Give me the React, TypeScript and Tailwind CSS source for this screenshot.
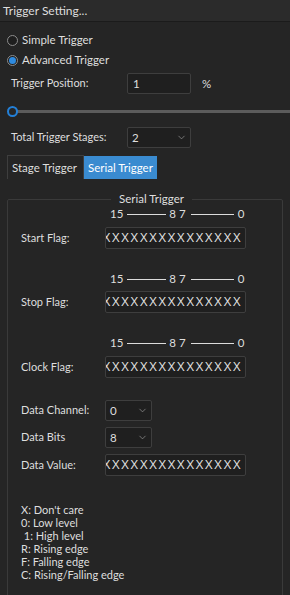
import { ChevronDown } from 'lucide-react';

const FONT = 'font-["Lato","Liberation_Sans",sans-serif]';

function Radio({ label, checked }: { label: string; checked?: boolean }) {
  return (
    <div className="flex h-[20px] items-center pl-[7px]">
      <span className="flex h-[11px] w-[11px] items-center justify-center rounded-full border border-[#8c8c8c] bg-[#1e1e1e]">
        {checked && <span className="h-[7px] w-[7px] rounded-full bg-[#2f8be0]" />}
      </span>
      <span className="ml-[4px] text-[11.5px]">{label}</span>
    </div>
  );
}

function Select({ value, width }: { value: string; width: string }) {
  return (
    <div className={`flex h-[21px] items-center justify-between rounded-[2px] border border-[#3e3e3e] bg-[#1f1f1f] pl-[4px] pr-[3px] ${width}`}>
      <span className="text-[11.5px]">{value}</span>
      <ChevronDown size={11} strokeWidth={1.5} className="text-[#9a9a9a]" />
    </div>
  );
}

function FlagInput() {
  return (
    <div className="flex h-[22px] w-[141px] items-center justify-end overflow-hidden whitespace-nowrap rounded-[2px] border border-[#3e3e3e] bg-[#1f1f1f] pr-[3px]">
      <span className='font-["Liberation_Sans",sans-serif] text-[12px] tracking-[1.3px]'>XXXXXXXXXXXXXXXX</span>
    </div>
  );
}

function Bits({ className = '' }: { className?: string }) {
  return (
    <div className={`flex h-[14px] items-center pl-[89px] text-[11.5px] leading-[14px] ${className}`}>
      <span>15</span>
      <span className="ml-[4px] mr-[3px] h-px w-[39px] bg-[#dcdcdc]" />
      <span>8 7</span>
      <span className="ml-[5px] mr-[4px] h-px w-[43px] bg-[#dcdcdc]" />
      <span>0</span>
    </div>
  );
}

function Row({ label, children, className = '' }: { label: string; children: React.ReactNode; className?: string }) {
  return (
    <div className={`flex items-center ${className}`}>
      <span className="w-[84px] text-[11px]">{label}</span>
      {children}
    </div>
  );
}

export default function App() {
  return (
    <div className={`h-[595px] w-[290px] overflow-hidden bg-[#252525] text-[#dedede] ${FONT}`}>
      <div className="h-[22px] border-b border-[#1b1b1b] bg-[#2b2b2b] pl-[3px] text-[12px] leading-[21px]">
        Trigger Setting...
      </div>

      <div className="mt-[8px]">
        <Radio label="Simple Trigger" />
        <Radio label="Advanced Trigger" checked />
      </div>

      <div className="mt-[3px] flex h-[21px] items-center pl-[11px]">
        <span className="w-[116px] text-[11px]">Trigger Position:</span>
        <div className="flex h-[21px] w-[64px] items-center rounded-[2px] border border-[#3e3e3e] bg-[#1f1f1f] pl-[5px] text-[11.5px]">
          1
        </div>
        <span className="ml-[11px] text-[11.5px]">%</span>
      </div>

      <div className="relative mt-[10px] flex h-[14px] items-center pl-[8px]">
        <div className="h-[3px] flex-1 bg-[#5c5c5c]" />
        <span className="absolute left-[7px] top-[2px] h-[11px] w-[11px] rounded-full border-2 border-[#2380d8] bg-[#262626]" />
      </div>

      <div className="mt-[9px] flex h-[21px] items-center pl-[11px]">
        <span className="w-[116px] text-[11px]">Total Trigger Stages:</span>
        <Select value="2" width="w-[64px]" />
      </div>

      <div className="mt-[7px] flex h-[24px] items-end pl-[7px]">
        <div className="flex h-[24px] w-[77px] items-center border border-b-0 border-[#3e3e3e] pl-[4px] text-[11.5px]">
          Stage Trigger
        </div>
        <div className="flex h-[23px] w-[73px] items-center bg-[#3a8bd0] pl-[4px] text-[11.5px] text-white">
          Serial Trigger
        </div>
      </div>

      <fieldset className="mx-[7px] mt-[12px] h-[420px] rounded-[2px] border border-[#3a3a3a] pl-[13px]">
        <legend className="mx-auto px-[8px] text-[11.5px] leading-[16px]">Serial Trigger</legend>

        <Bits />
        <Row label="Start Flag:" className="mt-[6px]">
          <FlagInput />
        </Row>

        <Bits className="mt-[23px]" />
        <Row label="Stop Flag:" className="mt-[5px]">
          <FlagInput />
        </Row>

        <Bits className="mt-[23px]" />
        <Row label="Clock Flag:" className="mt-[6px]">
          <FlagInput />
        </Row>

        <Row label="Data Channel:" className="mt-[22px]">
          <Select value="0" width="w-[47px]" />
        </Row>
        <Row label="Data Bits" className="mt-[6px]">
          <Select value="8" width="w-[47px]" />
        </Row>
        <Row label="Data Value:" className="mt-[6px]">
          <FlagInput />
        </Row>

        <div className="mt-[27px] whitespace-pre text-[11px] leading-[13px]">
          <div>X: Don't care</div>
          <div>0: Low level</div>
          <div> 1: High level</div>
          <div>R: Rising edge</div>
          <div>F: Falling edge</div>
          <div>C: Rising/Falling edge</div>
        </div>
      </fieldset>
    </div>
  );
}
